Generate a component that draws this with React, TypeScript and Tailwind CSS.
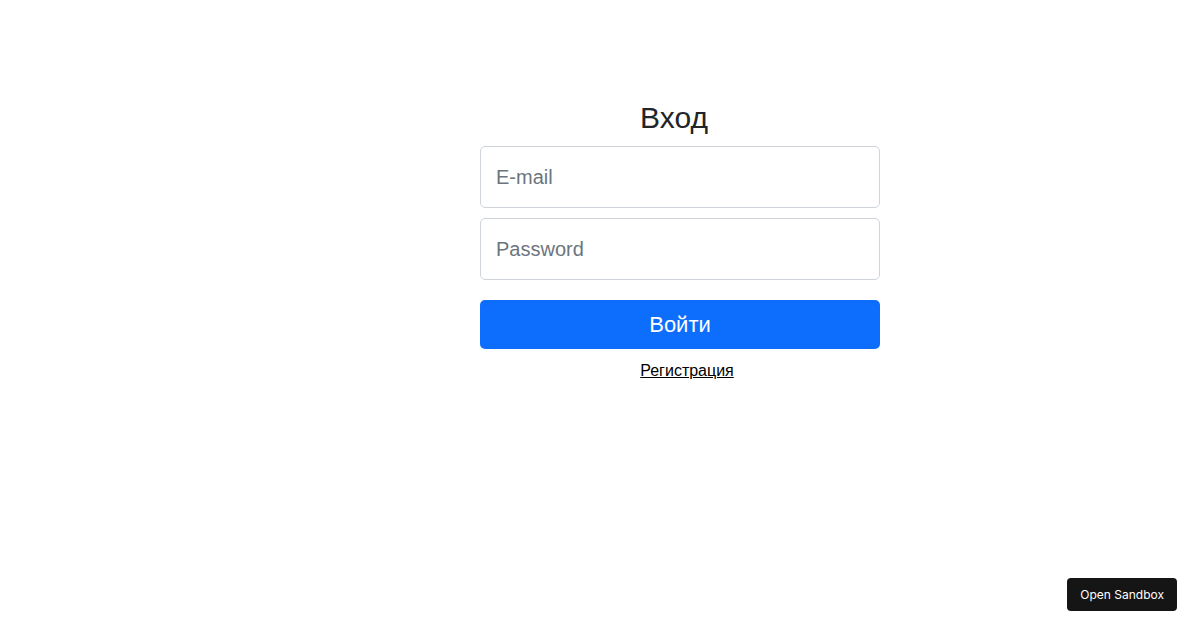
import React from 'react';

const App: React.FC = () => {
  return (
    <div className="min-h-screen bg-white pl-[160px] font-['Liberation_Sans',Arial,sans-serif] text-[#212529]">
      <div className="mx-auto w-[400px] pt-[100px]">
        <h2 className="mb-[10px] pr-3 text-center text-[30px] leading-[1.2] font-normal">Вход</h2>
        <form className="flex flex-col gap-[10px]">
          <input
            type="email"
            placeholder="E-mail"
            className="h-[62px] w-full rounded-[5px] border border-[#ced4da] px-[15px] text-[20px] text-[#212529] outline-none placeholder:text-[#6c757d]"
          />
          <input
            type="password"
            placeholder="Password"
            className="h-[62px] w-full rounded-[5px] border border-[#ced4da] px-[15px] text-[20px] text-[#212529] outline-none placeholder:text-[#6c757d]"
          />
          <button
            type="button"
            className="mt-[10px] h-[49px] w-full rounded-[5px] bg-[#0d6efd] text-[22px] text-white"
          >
            Войти
          </button>
        </form>
        <div className="mt-[10px] pl-[14px] text-center">
          <a href="#" className="text-[16px] text-black underline">Регистрация</a>
        </div>
      </div>
      <button className="fixed right-[23px] bottom-[19px] h-[33px] rounded-[4px] bg-[#151515] px-[13px] font-['Inter',sans-serif] text-[12px] text-white">
        Open Sandbox
      </button>
    </div>
  );
};

export default App;
